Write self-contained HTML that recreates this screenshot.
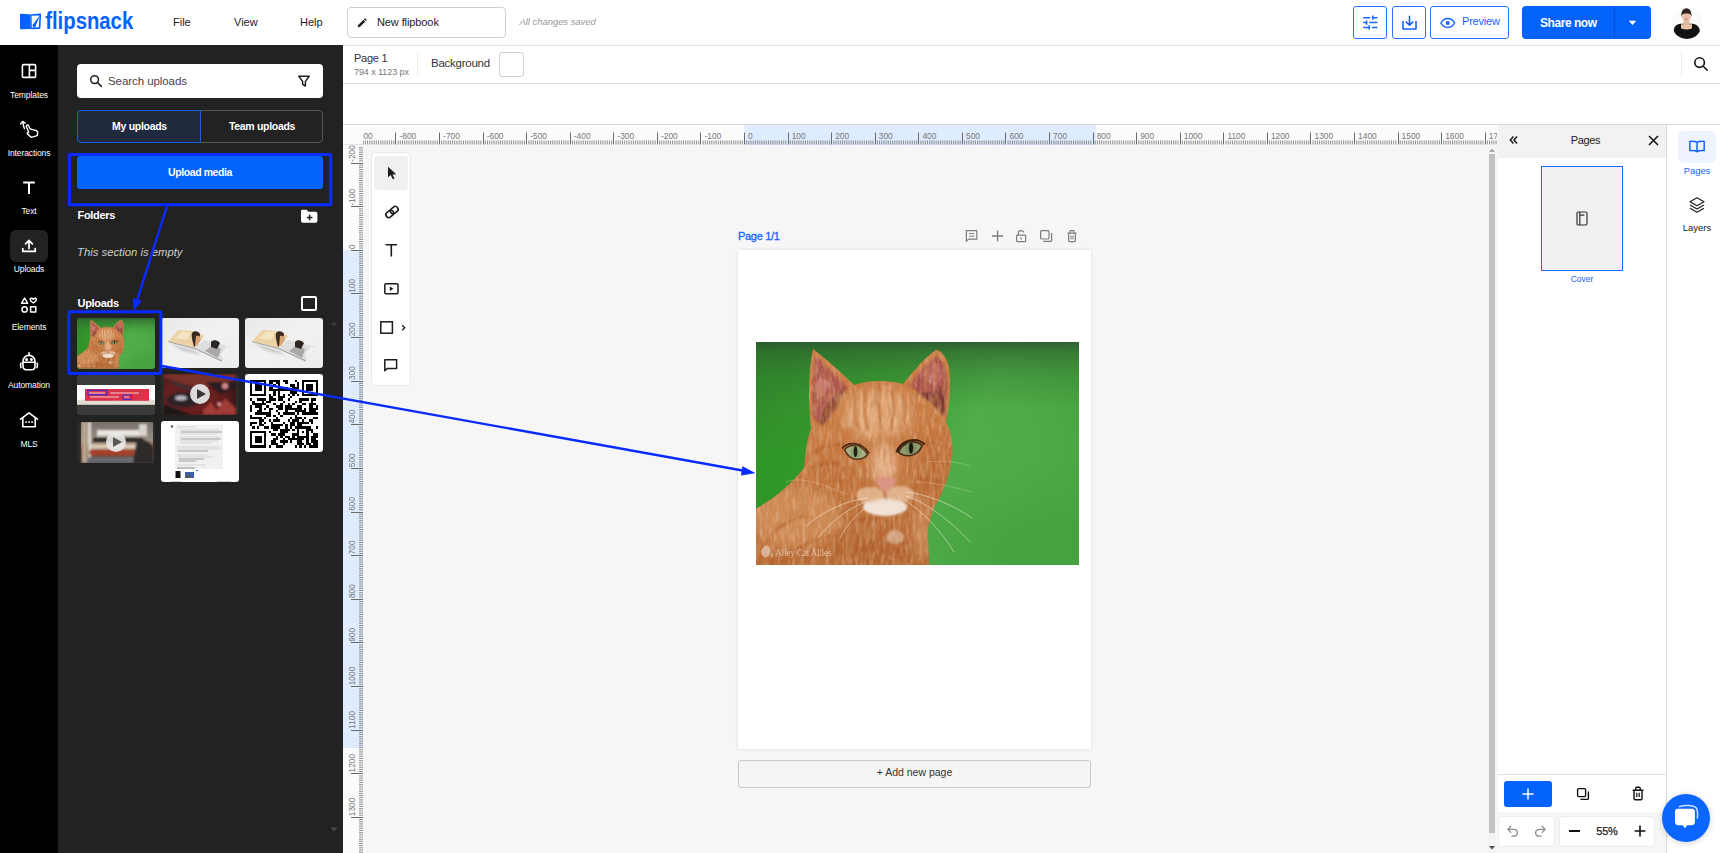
<!DOCTYPE html>
<html lang="en">
<head>
<meta charset="utf-8">
<title>Flipsnack editor</title>
<style>
*{box-sizing:border-box;margin:0;padding:0}
html,body{width:1720px;height:853px;overflow:hidden;background:#fff;font-family:"Liberation Sans",sans-serif;color:#222}
.abs{position:absolute}
#app{position:relative;width:1720px;height:853px;overflow:hidden;background:#fff}
/* top bar */
#topbar{position:absolute;left:0;top:0;width:1720px;height:46px;background:#fff;border-bottom:1px solid #e4e4e4}
.menu{position:absolute;top:15px;font-size:11px;color:#222;line-height:14px}
#title{position:absolute;left:347px;top:7px;width:159px;height:31px;border:1px solid #cfcfcf;border-radius:4px;background:#fff}
#title span{position:absolute;left:29px;top:7px;font-size:11px;line-height:14px;color:#222;letter-spacing:-0.1px}
#saved{position:absolute;left:519.500px;top:16px;letter-spacing:-0.050px;font-size:9.5px;line-height:12px;font-style:italic;color:#9a9a9a}
.tbtn{position:absolute;top:6px;height:33px;border:1px solid #2a73ff;border-radius:3px;background:#fff}
#share{position:absolute;left:1522px;top:6px;width:129px;height:33px;border-radius:4px;background:#0462fd}
#share b{position:absolute;left:18px;top:10px;font-size:12px;line-height:15px;color:#fff;letter-spacing:-0.45px}
#share i{position:absolute;left:92px;top:0;width:1px;height:33px;background:#0a4fd0}
/* left nav */
#nav{position:absolute;left:0;top:45px;width:58px;height:808px;background:#000}
.nlab{position:absolute;left:0;width:58px;text-align:center;font-size:8.5px;line-height:10px;color:#fff;letter-spacing:-0.1px}
.nico{position:absolute;left:19px;width:20px;height:20px}
/* panel */
#panel{position:absolute;left:58px;top:45px;width:285px;height:808px;background:#222}
#search{position:absolute;left:19px;top:19px;width:246px;height:34px;background:#fff;border-radius:4px}
#search span{position:absolute;left:31px;top:10px;font-size:11.5px;line-height:14px;color:#444;letter-spacing:-0.07px}
#tabs{position:absolute;left:19px;top:65px;width:246px;height:33px;border:1px solid #555;border-radius:4px}
#tab1{position:absolute;left:-1px;top:-1px;width:124px;height:33px;border:1px solid #1a5fd6;border-radius:4px 0 0 4px;background:#1f2a3e}
.tabl{position:absolute;top:9px;font-size:10.5px;line-height:13px;font-weight:bold;color:#fff;text-align:center;letter-spacing:-0.3px}
#upbtn{position:absolute;left:19px;top:111px;width:246px;height:33px;background:#0462fd;border-radius:3px;text-align:center;color:#fff;font-weight:bold;font-size:10.5px;line-height:33px;letter-spacing:-0.4px}
.h{position:absolute;left:19.500px;font-size:11px;line-height:14px;font-weight:bold;color:#fff;letter-spacing:-0.3px}
.th{position:absolute;border-radius:3px;overflow:hidden}
/* props bar */
#props{position:absolute;left:343px;top:46px;width:1377px;height:38px;background:#fff;border-bottom:1px solid #dcdcdc}
/* canvas */
#canvas{position:absolute;left:343px;top:124px;width:1377px;height:729px;background:#f6f6f6;border-top:1px solid #d9d9d9}
#page{position:absolute;left:738px;top:250px;width:353px;height:499px;background:#fff;box-shadow:0 0 3px rgba(0,0,0,.12)}
#addpage{position:absolute;left:738px;top:760px;width:353px;height:28px;border:1px solid #c9c9c9;border-radius:3px;background:#f5f5f5;text-align:center;font-size:10.5px;line-height:22px;color:#333}
/* right */
#ppanel{position:absolute;left:1498px;top:125px;width:169px;height:728px;background:#fff;border-right:1px solid #dcdcdc}
#rail{position:absolute;left:1667px;top:125px;width:53px;height:728px;background:#fff}
</style>
</head>
<body>
<div id="app">
<!--CAT-START-->
<svg width="0" height="0" style="position:absolute">
<defs>
  <linearGradient id="cg1" x1="0" y1="0" x2="1" y2="0.300">
    <stop offset="0" stop-color="#2f8a29"/><stop offset="0.400" stop-color="#3a9a32"/><stop offset="0.720" stop-color="#4daa46"/><stop offset="1" stop-color="#46a23e"/>
  </linearGradient>
  <linearGradient id="cg2" x1="0" y1="0" x2="0" y2="1">
    <stop offset="0" stop-color="#2b552d" stop-opacity="0.850"/><stop offset="0.050" stop-color="#2d602e" stop-opacity="0.600"/><stop offset="0.150" stop-color="#2e6c2d" stop-opacity="0.280"/><stop offset="0.300" stop-color="#2e6c2d" stop-opacity="0"/>
  </linearGradient>
  <radialGradient id="cg3" cx="0.820" cy="0.480" r="0.380">
    <stop offset="0" stop-color="#58b24f" stop-opacity="0.500"/><stop offset="1" stop-color="#5cb854" stop-opacity="0"/>
  </radialGradient>
  <radialGradient id="cg4" cx="0.080" cy="0.600" r="0.300">
    <stop offset="0" stop-color="#2c9a22" stop-opacity="0.700"/><stop offset="1" stop-color="#2c9a22" stop-opacity="0"/>
  </radialGradient>
  <linearGradient id="fur" x1="0" y1="0" x2="0.200" y2="1">
    <stop offset="0" stop-color="#cb7c43"/><stop offset="0.450" stop-color="#c97a41"/><stop offset="1" stop-color="#b56631"/>
  </linearGradient>
  <filter id="b1" x="-20%" y="-20%" width="140%" height="140%"><feGaussianBlur stdDeviation="1.200"/></filter>
  <filter id="b2" x="-20%" y="-20%" width="140%" height="140%"><feGaussianBlur stdDeviation="2.500"/></filter>
  <filter id="b3" x="-20%" y="-20%" width="140%" height="140%"><feGaussianBlur stdDeviation="0.600"/></filter>
  <filter id="b4" x="-30%" y="-30%" width="160%" height="160%"><feGaussianBlur stdDeviation="5"/></filter>
  <filter id="furn" x="0" y="0" width="100%" height="100%"><feTurbulence type="fractalNoise" baseFrequency="0.300 0.080" numOctaves="3" seed="4" result="n"/><feColorMatrix in="n" type="matrix" values="0 0 0 0 0.980  0 0 0 0 0.820  0 0 0 0 0.660  2.400 0 0 0 -1.000"/></filter>
  <filter id="furd" x="0" y="0" width="100%" height="100%"><feTurbulence type="fractalNoise" baseFrequency="0.220 0.060" numOctaves="3" seed="11" result="n"/><feColorMatrix in="n" type="matrix" values="0 0 0 0 0.560  0 0 0 0 0.240  0 0 0 0 0.080  0 2.600 0 0 -1.100"/></filter>
  <clipPath id="catclip">
    <path d="M0 167C10 161 20 154 28 147C36 140 42 133 48 126C49 112 51 98 55 86C52 60 52 30 57 7C70 17 86 31 98 43C112 38 132 38 147 42C157 30 168 16 180 8C186 8 192 18 193.500 28C194.500 45 194 62 190 80C197 94 198 108 195 122C192 138 186 152 179 164C175 174 172 182 172 192L173 223L0 223Z"/>
  </clipPath>
  <symbol id="cat" viewBox="0 0 323 223" preserveAspectRatio="none">
    <rect width="323" height="223" fill="url(#cg1)"/>
    <rect width="323" height="223" fill="url(#cg3)"/>
    <rect width="323" height="223" fill="url(#cg4)"/>
    <rect width="323" height="223" fill="url(#cg2)"/>
    <g filter="url(#b3)">
    <g clip-path="url(#catclip)">
      <rect width="200" height="223" fill="url(#fur)"/>
      <!-- ear inner -->
      <g filter="url(#b1)">
        <path d="M57.500 76C55 54 56 30 59.500 14C69 23 81 34 92 46C82 54 70 66 63 80Z" fill="#ad544c"/>
        <path d="M62 80C66 66 76 54 90 46C84 62 76 74 66 84Z" fill="#7a3a30" opacity="0.700"/>
        <path d="M60 40C64 34 70 36 74 44C70 52 64 56 60 58Z" fill="#d08478" opacity="0.700"/>
        <path d="M152 44C160 34 170 22 180 13C186 16 190 26 190.500 36C191.500 50 191 62 188 74C178 62 164 50 152 44Z" fill="#a64c46"/>
        <path d="M160 50C170 56 182 66 188 76C190 64 190 54 188 46C180 50 170 52 160 50Z" fill="#6a2c28" opacity="0.700"/>
        <path d="M166 30C172 24 180 20 184 22C186 30 184 40 180 46C174 42 168 36 166 30Z" fill="#cc7c70" opacity="0.600"/>
      </g>
      <!-- shading -->
      <g filter="url(#b4)">
        <ellipse cx="122" cy="72" rx="34" ry="24" fill="#e9b48a" opacity="0.800"/>
        <ellipse cx="128" cy="122" rx="13" ry="20" fill="#eab890" opacity="0.900"/>
        <ellipse cx="78" cy="130" rx="16" ry="18" fill="#c0703a" opacity="0.550"/>
        <ellipse cx="178" cy="124" rx="13" ry="26" fill="#b86832" opacity="0.650"/>
        <ellipse cx="40" cy="176" rx="44" ry="30" fill="#dc9c68" opacity="0.600"/>
        <ellipse cx="130" cy="208" rx="46" ry="16" fill="#b0602c" opacity="0.600"/>
        <ellipse cx="100" cy="186" rx="20" ry="10" fill="#b96a34" opacity="0.400"/>
        <ellipse cx="166" cy="190" rx="8" ry="30" fill="#e0a878" opacity="0.500"/>
      </g>
      <!-- stripes -->
      <g filter="url(#b1)" fill="none" stroke="#ad5a26" stroke-width="2.600" opacity="0.650" stroke-linecap="round">
        <path d="M110 48C108 60 108 74 112 88M123 44C122 58 123 72 125 86M136 48C139 60 138 74 135 88M100 56C98 66 98 76 102 86M147 54C150 64 150 76 146 86"/>
        <path d="M58 110C68 104 78 102 88 102M56 126C64 122 74 120 84 122M62 146C70 140 80 138 88 140"/>
        <path d="M192 106C184 102 174 100 166 102M193 122C185 118 177 118 169 120M186 144C180 138 172 136 164 138"/>
        <path d="M16 192C26 182 38 176 50 174M36 212C50 200 66 194 82 194M92 216C106 206 126 204 146 208M100 180C110 176 124 176 134 180"/>
      </g>
      <rect width="200" height="223" filter="url(#furn)" opacity="0.330"/>
      <rect width="200" height="223" filter="url(#furd)" opacity="0.650"/>
    </g>
    </g>
    <!-- muzzle -->
    <g filter="url(#b1)">
      <ellipse cx="129" cy="165" rx="22" ry="9" fill="#f3e8de" opacity="0.950"/>
      <ellipse cx="114" cy="153" rx="14" ry="8" fill="#e9c4a2" opacity="0.750"/>
      <ellipse cx="144" cy="152" rx="14" ry="8" fill="#e9c4a2" opacity="0.750"/>
      <ellipse cx="139" cy="195" rx="9" ry="7" fill="#f0e0d0" opacity="0.450"/>
      <path d="M119 137Q130 133 141 137Q137 147 130 150Q123 147 119 137Z" fill="#dc9484"/>
      <path d="M130 150L130 159" stroke="#b8685a" stroke-width="1.200" fill="none"/>
    </g>
    <!-- eyes -->
    <g filter="url(#b3)">
      <path d="M87.500 107.500C92 100.500 106 100 112.500 113C106 120.500 93 120.500 87.500 107.500Z" fill="#5a3418"/>
      <path d="M89.500 108C93.500 102.500 105 102.500 110.500 112.500C105.500 118.500 94.500 118.500 89.500 108Z" fill="#a4b084"/>
      <ellipse cx="100" cy="110" rx="5.500" ry="6.500" fill="#8c9c6c" opacity="0.700"/>
      <ellipse cx="99.500" cy="109.500" rx="1.900" ry="5.600" fill="#1f2416"/>
      <path d="M86 106.500C92 99.500 106 99.500 113 111.500" stroke="#4a2a14" stroke-width="1.800" fill="none"/>
      <path d="M141.500 110.500C146 98 160.500 96 167 103.500C164 114.500 149.500 118 141.500 110.500Z" fill="#4a2a14"/>
      <path d="M143.500 110C147.500 100.500 160 98.500 165 103.800C162.500 112.500 150.500 116 143.500 110Z" fill="#8f9d6e"/>
      <ellipse cx="154.500" cy="106.500" rx="5.500" ry="6.500" fill="#7c8a5c" opacity="0.700"/>
      <ellipse cx="155" cy="106" rx="2.200" ry="5.800" fill="#1a1e12"/>
      <path d="M140.500 110.500C145 97.500 161 94.500 168.500 102.500" stroke="#3e2210" stroke-width="2.200" fill="none"/>
    </g>
    <!-- whiskers -->
    <g fill="none" stroke="#f8f1e8" stroke-width="0.800" opacity="0.650" stroke-linecap="round">
      <path d="M112 156C90 158 66 170 50 184M110 160C92 166 74 180 62 196M114 163C100 172 90 184 84 196"/>
      <path d="M92 152C74 148 50 132 30 140" opacity="0.500"/>
      <path d="M150 150C170 152 196 162 216 176M150 154C170 160 196 180 214 200M148 158C166 168 186 190 198 210"/>
      <path d="M160 140C180 140 200 146 216 150M170 120C186 118 202 120 214 124" opacity="0.500"/>
    </g>
    <text x="19" y="213.500" font-family="Liberation Serif, serif" font-size="9.500" fill="#fff" fill-opacity="0.500" letter-spacing="-0.300">Alley Cat Allies</text>
    <path d="M8 205C10 202 14 204 14 209C14 214 10 218 7 214C4 211 5 207 8 205ZM15 212C17 210 18 214 16 216Z" fill="#fff" fill-opacity="0.450"/>
  </symbol>
</defs>
</svg>

<!--CAT-END-->

<!-- TOPBAR -->
<div id="topbar">
  <svg class="abs" style="left:19px;top:6px" width="120" height="32" viewBox="0 0 120 32">
    <path d="M1 8.600Q1 7.700 2 7.800L10.400 8.300Q11.200 8.400 11.200 9.200V23L2 23.300Q1 23.300 1 22.400Z" fill="#0462fd"/>
    <path d="M11.200 9.200Q11.200 8.400 12 8.300L21 7.600Q22.200 7.500 22.100 8.700L21.400 21.800Q21.300 23 20.200 23L11.200 23.300Z M20.400 9.400L19.800 21.200L12.800 21.600L12.600 9.800Z" fill="#0462fd" fill-rule="evenodd"/>
    <path d="M20.800 9.200L13.200 19.400L15.800 22.200Z" fill="#0462fd"/>
    <text transform="translate(26.200 22.900) scale(0.883 1)" font-family="Liberation Sans, sans-serif" font-weight="bold" font-size="23" fill="#0462fd">flipsnack</text>
  </svg>
  <div class="menu" style="left:173px">File</div>
  <div class="menu" style="left:234px">View</div>
  <div class="menu" style="left:300px">Help</div>
  <div id="title">
    <svg class="abs" style="left:9px;top:10px" width="10" height="10" viewBox="0 0 12 12"><path d="M1.2 8.6 L7.6 2.2 L9.8 4.4 L3.4 10.8 L1 11 Z M8.3 1.5 L9.1 0.7 Q9.6 0.3 10.1 0.7 L11.3 1.9 Q11.7 2.4 11.3 2.9 L10.5 3.7 Z" fill="#222"/></svg>
    <span>New flipbook</span>
  </div>
  <div id="saved">All changes saved</div>

  <div class="tbtn" style="left:1353px;width:34px"><svg class="abs" style="left:8px;top:8px" width="17" height="17" viewBox="0 0 17 17" fill="none" stroke="#1463ff" stroke-width="1.500"><path d="M1.200 2.700H8.200M11.400 2.700H15.400M1.200 7.600H4M7.200 7.600H15.400M1.200 12.400H6.600M9.800 12.400H15.400M10.800 0.600V4.800M4.600 5.500V9.700M7.200 10.300V14.500"/></svg></div>
  <div class="tbtn" style="left:1392px;width:34px"><svg class="abs" style="left:8px;top:8px" width="17" height="17" viewBox="0 0 17 17" fill="none" stroke="#1463ff" stroke-width="1.600" stroke-linejoin="round"><path d="M8.500 0.800V10M4.800 6.600L8.500 10.200L12.200 6.600M2 6V14H15V6"/></svg></div>
  <div class="tbtn" style="left:1430px;width:79px"><svg class="abs" style="left:9px;top:9.500px" width="15.500" height="12" viewBox="0 0 17 13" fill="none" stroke="#1463ff" stroke-width="1.600"><path d="M1 6.500C3 2.800 5.600 1.600 8.500 1.600C11.400 1.600 14 2.800 16 6.500C14 10.200 11.400 11.400 8.500 11.400C5.600 11.400 3 10.200 1 6.500Z"/><circle cx="8.500" cy="6.500" r="2.200" fill="#1463ff" stroke="none"/></svg><span class="abs" style="left:31px;top:7px;font-size:11px;line-height:14px;color:#1463ff;letter-spacing:-0.200px">Preview</span></div>
  <div id="share"><b>Share now</b><i></i><svg class="abs" style="left:106px;top:14px" width="9" height="6" viewBox="0 0 9 6"><path d="M0.800 0.800H8.200L4.500 5Z" fill="#fff"/></svg></div>
  <svg class="abs" style="left:1671px;top:7px" width="32" height="32" viewBox="0 0 32 32"><defs><clipPath id="avc"><circle cx="16" cy="16" r="16"/></clipPath></defs><circle cx="16" cy="16" r="16" fill="#fbfbfb"/><g clip-path="url(#avc)"><path d="M2.800 24C2.600 20 5.400 17 9.600 16.800L21.400 16.800C25.600 17 28.600 20 28.800 24C27 29 22 32 15.800 32C9.600 32 4.600 29 2.800 24Z" fill="#121212"/><path d="M10 17.200H21V21.600Q15.500 23.600 10 21.600Z" fill="#e9c3a8"/><path d="M12.600 12H18.400V18H12.600Z" fill="#e2b79c"/><ellipse cx="15.400" cy="9.200" rx="4.400" ry="5.600" fill="#e8bfa6"/><path d="M10.400 10.800C9.600 4.800 12 1.200 15.400 1.200C18.800 1.200 21.200 4.800 20.400 10.800C20.200 7.600 19.600 6.400 15.400 6.400C11.200 6.400 10.600 7.600 10.400 10.800Z" fill="#2e221c"/><path d="M14 12.200H16.800" stroke="#b8584e" stroke-width="0.800"/></g></svg>
</div>

<!-- LEFT NAV -->
<div id="nav">
  <!-- templates -->
  <svg class="abs" style="left:19px;top:16px" width="20" height="20" viewBox="0 0 20 20" fill="none" stroke="#fff" stroke-width="1.6"><rect x="3.4" y="3.6" width="13.2" height="12.8" rx="1.2"/><path d="M10.4 3.6V16.4M10.4 9.4H16.6"/></svg>
  <div class="nlab" style="top:45px">Templates</div>
  <!-- interactions -->
  <svg class="abs" style="left:18px;top:73px" width="24" height="22" viewBox="0 0 24 22" fill="none" stroke="#fff" stroke-width="1.400" stroke-linecap="round" stroke-linejoin="round"><path d="M6.400 10.600C5.600 8.600 5.200 6.600 4.800 4.200M2.600 6L4.800 3.400L7.200 5.200"/><path d="M10.600 14L8.400 8.800C7.800 7.200 9.800 6.400 10.600 7.800L12.200 11L17.600 12.400C19.200 12.800 19.800 13.800 19.600 15.200L19.200 17.600L13.400 19.400L9.600 16.200C8.800 15.400 9.400 14.200 10.800 14.800"/></svg>
  <div class="nlab" style="top:103px">Interactions</div>
  <!-- text -->
  <svg class="abs" style="left:19px;top:133px" width="20" height="20" viewBox="0 0 20 20" fill="none" stroke="#fff" stroke-width="2"><path d="M4.2 4.5H15.8M10 4.5V16"/></svg>
  <div class="nlab" style="top:161px">Text</div>
  <!-- uploads -->
  <div class="abs" style="left:10px;top:185px;width:38px;height:32px;border-radius:6px;background:#222"></div>
  <svg class="abs" style="left:19px;top:191px" width="20" height="20" viewBox="0 0 20 20" fill="none" stroke="#fff" stroke-width="1.7" stroke-linecap="round" stroke-linejoin="round"><path d="M10 12.6V4.6M6.6 7.8L10 4.4L13.4 7.8M3.8 12.6V15.4H16.2V12.6"/></svg>
  <div class="nlab" style="top:219px">Uploads</div>
  <!-- elements -->
  <svg class="abs" style="left:19px;top:250px" width="20" height="20" viewBox="0 0 20 20" fill="none" stroke="#fff" stroke-width="1.5" stroke-linejoin="round"><path d="M5.6 3L8.6 8.2H2.6Z"/><path d="M14.3 8C12.6 6.8 11.2 5.6 11.2 4.4C11.2 3.2 12.8 2.6 14.3 4.2C15.8 2.6 17.4 3.2 17.4 4.4C17.4 5.6 16 6.8 14.3 8Z"/><circle cx="5.6" cy="14.4" r="2.6"/><rect x="11.6" y="11.8" width="5.2" height="5.2"/></svg>
  <div class="nlab" style="top:277px">Elements</div>
  <!-- automation -->
  <svg class="abs" style="left:18px;top:306px" width="22" height="22" viewBox="0 0 22 22" fill="none" stroke="#fff" stroke-width="1.6" stroke-linecap="round" stroke-linejoin="round"><path d="M11 1.8V4.2"/><path d="M5 11.2V10.4C5 7 7.6 4.4 11 4.4C14.4 4.4 17 7 17 10.4V11.2"/><path d="M5 11.2H17V15.2C17 17.4 15.6 18.8 13.4 18.8H8.6C6.4 18.8 5 17.4 5 15.200Z"/><path d="M3 12.200C2.400 13.400 2.400 15.400 3 16.600M19 12.200C19.600 13.400 19.600 15.400 19 16.600"/><circle cx="8.600" cy="8.400" r="0.700" fill="#fff"/><circle cx="13.400" cy="8.400" r="0.700" fill="#fff"/></svg>
  <div class="nlab" style="top:335px">Automation</div>
  <!-- mls -->
  <svg class="abs" style="left:18px;top:364px" width="22" height="22" viewBox="0 0 22 22" fill="none" stroke="#fff" stroke-width="1.6" stroke-linejoin="round" stroke-linecap="round"><path d="M2.600 10.200L11 3.800L19.400 10.200"/><path d="M4.800 9V17.800H17.200V9"/><circle cx="8" cy="13" r="0.600" fill="#fff" stroke-width="0.600"/><circle cx="11" cy="13" r="0.600" fill="#fff" stroke-width="0.600"/><circle cx="14" cy="13" r="0.600" fill="#fff" stroke-width="0.600"/></svg>
  <div class="nlab" style="top:394px">MLS</div>
</div>

<!-- PANEL -->
<div id="panel">
  <div id="search"><svg class="abs" style="left:12px;top:10px" width="14" height="14" viewBox="0 0 14 14" fill="none" stroke="#222" stroke-width="1.500" stroke-linecap="round"><circle cx="5.600" cy="5.600" r="3.900"/><path d="M8.600 8.600L12.400 12.400"/></svg><span>Search uploads</span><svg class="abs" style="left:220px;top:10px" width="14" height="14" viewBox="0 0 14 14" fill="none" stroke="#222" stroke-width="1.500" stroke-linejoin="round"><path d="M1.800 2.200H12.200L8.400 7.400V12L5.600 10.400V7.400Z"/></svg></div>
  <div id="tabs"><div id="tab1"></div>
    <div class="tabl" style="left:0;width:123px">My uploads</div>
    <div class="tabl" style="left:123px;width:122px">Team uploads</div>
  </div>
  <div id="upbtn">Upload media</div>
  <div class="h" style="top:163px">Folders</div>
  <svg class="abs" style="left:242px;top:164px" width="19" height="15" viewBox="0 0 19 15"><path d="M1 2.200Q1 0.800 2.400 0.800H6.600L8.600 2.800H15.600Q17.400 2.800 17.400 4.600V12Q17.400 13.800 15.600 13.800H2.800Q1 13.800 1 12Z" fill="#fff"/><path d="M9.600 5.600V11.200M6.800 8.400H12.400" stroke="#222" stroke-width="1.500"/></svg>
  <div class="abs" style="left:19px;top:200px;font-size:11.300px;line-height:14px;font-style:italic;color:#cfcfcf">This section is empty</div>
  <div class="h" style="top:251px">Uploads</div>
  <div class="abs" style="left:243px;top:251px;width:16px;height:15px;border:2px solid #fff;border-radius:2px"></div>
  <!-- THUMBS -->
  <div class="th" style="left:19px;top:273px;width:78px;height:51px"><svg width="78" height="51"><use href="#cat" width="78" height="51"/></svg></div>
  <div class="th" style="left:103px;top:273px;width:78px;height:50px"><svg width="78" height="50" viewBox="0 0 78 50"><defs><linearGradient id="bkbg1" x1="0" y1="0" x2="1" y2="1"><stop offset="0" stop-color="#e9e9e9"/><stop offset="0.5" stop-color="#f1f1f1"/><stop offset="1" stop-color="#ececec"/></linearGradient></defs>
<rect width="78" height="50" fill="url(#bkbg1)"/>
<path d="M8 25L34 33L40 37L22 33Z" fill="#bdbdbd" filter="url(#b1)" opacity="0.8"/>
<path d="M7.200 23.200L17.400 12L31.700 13L43.300 17.800L33.700 30Z" fill="#ecd3a6"/>
<path d="M14 20L21 13.500L30 14.500L26 22Z" fill="#f4e4c4"/>
<path d="M33.700 30L43.300 21.900L69.800 28.700L61 42.600Z" fill="#dedede"/>
<path d="M44 33L52 27L60 31L57 40Z" fill="#a9a9a9"/>
<path d="M60 36L66 29L69 30L62 41Z" fill="#f2f2f2"/>
<path d="M31 15C33 12 38 13 39 16C39 20 36 22 35 27L33 29C32 24 30 19 31 15Z" fill="#3a2a20"/>
<path d="M35 18C37 17 40 19 40 22L36 28L34 28Z" fill="#d9a778"/>
<path d="M50 24C52 21 57 22 59 25L56 31L50 29Z" fill="#2e2622"/>
<path d="M7.200 23.200L33.700 30L61 42.600L60.500 43.500L33.500 31L7 24Z" fill="#9a9a9a"/>
</svg></div>
  <div class="th" style="left:187px;top:273px;width:78px;height:50px"><svg width="78" height="50" viewBox="0 0 78 50"><defs><linearGradient id="bkbg2" x1="0" y1="0" x2="1" y2="1"><stop offset="0" stop-color="#e9e9e9"/><stop offset="0.5" stop-color="#f1f1f1"/><stop offset="1" stop-color="#ececec"/></linearGradient></defs>
<rect width="78" height="50" fill="url(#bkbg2)"/>
<path d="M8 25L34 33L40 37L22 33Z" fill="#bdbdbd" filter="url(#b1)" opacity="0.8"/>
<path d="M7.200 23.200L17.400 12L31.700 13L43.300 17.800L33.700 30Z" fill="#ecd3a6"/>
<path d="M14 20L21 13.500L30 14.500L26 22Z" fill="#f4e4c4"/>
<path d="M33.700 30L43.300 21.900L69.800 28.700L61 42.600Z" fill="#dedede"/>
<path d="M44 33L52 27L60 31L57 40Z" fill="#a9a9a9"/>
<path d="M60 36L66 29L69 30L62 41Z" fill="#f2f2f2"/>
<path d="M31 15C33 12 38 13 39 16C39 20 36 22 35 27L33 29C32 24 30 19 31 15Z" fill="#3a2a20"/>
<path d="M35 18C37 17 40 19 40 22L36 28L34 28Z" fill="#d9a778"/>
<path d="M50 24C52 21 57 22 59 25L56 31L50 29Z" fill="#2e2622"/>
<path d="M7.200 23.200L33.700 30L61 42.600L60.500 43.500L33.500 31L7 24Z" fill="#9a9a9a"/>
</svg></div>
  <div class="th" style="left:19px;top:330px;width:78px;height:40px;background:#3b3b3b">
    <svg width="78" height="40" viewBox="0 0 78 40"><rect x="0" y="10" width="78" height="19.500" fill="#fff"/><path d="M0 25L20 23L40 26L60 22L78 25V29.500H0Z" fill="#e4ddd4"/><rect x="8" y="14" width="64" height="11.800" fill="#d9324a"/><path d="M12 18H28M33 18H62M13 22H42M47 22H52" stroke="#f6c9d0" stroke-width="1.200"/><rect x="11" y="15.200" width="19" height="4.600" fill="none" stroke="#0a2bff" stroke-width="0.900"/><rect x="46" y="20" width="8.500" height="4.400" fill="none" stroke="#1a2cff" stroke-width="0.800"/></svg>
  </div>
  <div class="th" style="left:103px;top:329px;width:78px;height:41px;background:#2b2b2b">
    <svg width="78" height="41" viewBox="0 0 78 41"><defs><radialGradient id="v1" cx="0.350" cy="0.550" r="0.700"><stop offset="0" stop-color="#4a2224"/><stop offset="0.500" stop-color="#6a201e"/><stop offset="1" stop-color="#3a1618"/></radialGradient></defs>
    <rect x="3" y="0" width="72" height="41" fill="url(#v1)"/>
    <g filter="url(#b1)"><ellipse cx="22" cy="26" rx="16" ry="7" fill="#2a2226"/><ellipse cx="20" cy="24" rx="6" ry="2.600" fill="#b9b4c0"/><path d="M3 4L40 14L75 6V0H3Z" fill="#7a302c"/><path d="M3 30L30 41H3Z" fill="#1e1618"/><path d="M44 8L60 20L75 14V8Z" fill="#2a1c20"/><path d="M42 36L50 28L56 36L64 24L75 34V41H42Z" fill="#a03a34"/><circle cx="64" cy="12" r="3" fill="#d98a8a"/><circle cx="58" cy="30" r="2" fill="#e8a0a0"/><path d="M10 8L34 16" stroke="#3a3038" stroke-width="3"/></g>
    <circle cx="39" cy="20" r="10" fill="#e8e8e8" fill-opacity="0.930"/><path d="M36 15L45 20L36 25Z" fill="#3a3438"/></svg>
  </div>
  <div class="th" style="left:187px;top:329px;width:78px;height:78px;background:#fff">
    <svg width="78" height="78" viewBox="0 0 78 78"><path d="M5.00 5.50h16.41v2.34h-16.41zM23.76 5.50h11.72v2.34h-11.72zM37.83 5.50h4.69v2.34h-4.69zM49.55 5.50h2.34v2.34h-2.34zM56.59 5.50h16.41v2.34h-16.41zM5.00 7.84h2.34v2.34h-2.34zM19.07 7.84h2.34v2.34h-2.34zM23.76 7.84h4.69v2.34h-4.69zM30.79 7.84h4.69v2.34h-4.69zM40.17 7.84h2.34v2.34h-2.34zM51.90 7.84h2.34v2.34h-2.34zM56.59 7.84h2.34v2.34h-2.34zM70.66 7.84h2.34v2.34h-2.34zM5.00 10.19h2.34v2.34h-2.34zM9.69 10.19h7.03v2.34h-7.03zM19.07 10.19h2.34v2.34h-2.34zM28.45 10.19h2.34v2.34h-2.34zM33.14 10.19h2.34v2.34h-2.34zM44.86 10.19h4.69v2.34h-4.69zM51.90 10.19h2.34v2.34h-2.34zM56.59 10.19h2.34v2.34h-2.34zM61.28 10.19h7.03v2.34h-7.03zM70.66 10.19h2.34v2.34h-2.34zM5.00 12.53h2.34v2.34h-2.34zM9.69 12.53h7.03v2.34h-7.03zM19.07 12.53h2.34v2.34h-2.34zM23.76 12.53h4.69v2.34h-4.69zM33.14 12.53h9.38v2.34h-9.38zM47.21 12.53h7.03v2.34h-7.03zM56.59 12.53h2.34v2.34h-2.34zM61.28 12.53h7.03v2.34h-7.03zM70.66 12.53h2.34v2.34h-2.34zM5.00 14.88h2.34v2.34h-2.34zM9.69 14.88h7.03v2.34h-7.03zM19.07 14.88h2.34v2.34h-2.34zM23.76 14.88h25.79v2.34h-25.79zM56.59 14.88h2.34v2.34h-2.34zM61.28 14.88h7.03v2.34h-7.03zM70.66 14.88h2.34v2.34h-2.34zM5.00 17.22h2.34v2.34h-2.34zM19.07 17.22h2.34v2.34h-2.34zM28.45 17.22h2.34v2.34h-2.34zM33.14 17.22h2.34v2.34h-2.34zM44.86 17.22h7.03v2.34h-7.03zM56.59 17.22h2.34v2.34h-2.34zM70.66 17.22h2.34v2.34h-2.34zM5.00 19.57h16.41v2.34h-16.41zM23.76 19.57h2.34v2.34h-2.34zM28.45 19.57h2.34v2.34h-2.34zM33.14 19.57h2.34v2.34h-2.34zM37.83 19.57h2.34v2.34h-2.34zM42.52 19.57h2.34v2.34h-2.34zM47.21 19.57h2.34v2.34h-2.34zM51.90 19.57h2.34v2.34h-2.34zM56.59 19.57h16.41v2.34h-16.41zM23.76 21.91h4.69v2.34h-4.69zM33.14 21.91h7.03v2.34h-7.03zM44.86 21.91h2.34v2.34h-2.34zM5.00 24.26h2.34v2.34h-2.34zM12.03 24.26h9.38v2.34h-9.38zM23.76 24.26h7.03v2.34h-7.03zM33.14 24.26h4.69v2.34h-4.69zM42.52 24.26h2.34v2.34h-2.34zM54.24 24.26h9.38v2.34h-9.38zM65.97 24.26h4.69v2.34h-4.69zM7.34 26.60h2.34v2.34h-2.34zM16.72 26.60h2.34v2.34h-2.34zM21.41 26.60h4.69v2.34h-4.69zM37.83 26.60h2.34v2.34h-2.34zM49.55 26.60h2.34v2.34h-2.34zM54.24 26.60h2.34v2.34h-2.34zM65.97 26.60h2.34v2.34h-2.34zM7.34 28.95h14.07v2.34h-14.07zM28.45 28.95h2.34v2.34h-2.34zM35.48 28.95h2.34v2.34h-2.34zM42.52 28.95h2.34v2.34h-2.34zM47.21 28.95h2.34v2.34h-2.34zM56.59 28.95h4.69v2.34h-4.69zM63.62 28.95h7.03v2.34h-7.03zM5.00 31.29h2.34v2.34h-2.34zM9.69 31.29h7.03v2.34h-7.03zM21.41 31.29h2.34v2.34h-2.34zM30.79 31.29h7.03v2.34h-7.03zM40.17 31.29h7.03v2.34h-7.03zM51.90 31.29h4.69v2.34h-4.69zM63.62 31.29h4.69v2.34h-4.69zM70.66 31.29h2.34v2.34h-2.34zM5.00 33.64h2.34v2.34h-2.34zM14.38 33.64h2.34v2.34h-2.34zM19.07 33.64h2.34v2.34h-2.34zM23.76 33.64h4.69v2.34h-4.69zM33.14 33.64h4.69v2.34h-4.69zM40.17 33.64h16.41v2.34h-16.41zM58.93 33.64h2.34v2.34h-2.34zM63.62 33.64h9.38v2.34h-9.38zM5.00 35.98h2.34v2.34h-2.34zM12.03 35.98h4.69v2.34h-4.69zM23.76 35.98h2.34v2.34h-2.34zM30.79 35.98h2.34v2.34h-2.34zM40.17 35.98h2.34v2.34h-2.34zM49.55 35.98h11.72v2.34h-11.72zM63.62 35.98h7.03v2.34h-7.03zM9.69 38.33h16.41v2.34h-16.41zM33.14 38.33h2.34v2.34h-2.34zM37.83 38.33h11.72v2.34h-11.72zM51.90 38.33h2.34v2.34h-2.34zM56.59 38.33h16.41v2.34h-16.41zM5.00 40.67h2.34v2.34h-2.34zM21.41 40.67h4.69v2.34h-4.69zM28.45 40.67h2.34v2.34h-2.34zM35.48 40.67h2.34v2.34h-2.34zM49.55 40.67h2.34v2.34h-2.34zM5.00 43.02h11.72v2.34h-11.72zM19.07 43.02h2.34v2.34h-2.34zM30.79 43.02h2.34v2.34h-2.34zM44.86 43.02h2.34v2.34h-2.34zM49.55 43.02h7.03v2.34h-7.03zM58.93 43.02h2.34v2.34h-2.34zM68.31 43.02h4.69v2.34h-4.69zM14.38 45.36h4.69v2.34h-4.69zM23.76 45.36h2.34v2.34h-2.34zM28.45 45.36h7.03v2.34h-7.03zM42.52 45.36h2.34v2.34h-2.34zM47.21 45.36h7.03v2.34h-7.03zM56.59 45.36h2.34v2.34h-2.34zM63.62 45.36h4.69v2.34h-4.69zM5.00 47.71h7.03v2.34h-7.03zM14.38 47.71h2.34v2.34h-2.34zM19.07 47.71h2.34v2.34h-2.34zM26.10 47.71h2.34v2.34h-2.34zM37.83 47.71h2.34v2.34h-2.34zM44.86 47.71h4.69v2.34h-4.69zM51.90 47.71h11.72v2.34h-11.72zM65.97 47.71h2.34v2.34h-2.34zM5.00 50.05h2.34v2.34h-2.34zM14.38 50.05h4.69v2.34h-4.69zM26.10 50.05h11.72v2.34h-11.72zM40.17 50.05h2.34v2.34h-2.34zM44.86 50.05h4.69v2.34h-4.69zM51.90 50.05h4.69v2.34h-4.69zM7.34 52.40h2.34v2.34h-2.34zM12.03 52.40h2.34v2.34h-2.34zM19.07 52.40h4.69v2.34h-4.69zM26.10 52.40h9.38v2.34h-9.38zM40.17 52.40h2.34v2.34h-2.34zM44.86 52.40h2.34v2.34h-2.34zM49.55 52.40h16.41v2.34h-16.41zM70.66 52.40h2.34v2.34h-2.34zM28.45 54.74h4.69v2.34h-4.69zM35.48 54.74h9.38v2.34h-9.38zM47.21 54.74h2.34v2.34h-2.34zM51.90 54.74h2.34v2.34h-2.34zM61.28 54.74h7.03v2.34h-7.03zM5.00 57.09h16.41v2.34h-16.41zM23.76 57.09h2.34v2.34h-2.34zM35.48 57.09h7.03v2.34h-7.03zM51.90 57.09h2.34v2.34h-2.34zM56.59 57.09h2.34v2.34h-2.34zM61.28 57.09h2.34v2.34h-2.34zM65.97 57.09h2.34v2.34h-2.34zM5.00 59.43h2.34v2.34h-2.34zM19.07 59.43h2.34v2.34h-2.34zM26.10 59.43h4.69v2.34h-4.69zM33.14 59.43h7.03v2.34h-7.03zM47.21 59.43h7.03v2.34h-7.03zM61.28 59.43h2.34v2.34h-2.34zM68.31 59.43h4.69v2.34h-4.69zM5.00 61.78h2.34v2.34h-2.34zM9.69 61.78h7.03v2.34h-7.03zM19.07 61.78h2.34v2.34h-2.34zM30.79 61.78h2.34v2.34h-2.34zM35.48 61.78h2.34v2.34h-2.34zM40.17 61.78h4.69v2.34h-4.69zM47.21 61.78h2.34v2.34h-2.34zM51.90 61.78h11.72v2.34h-11.72zM65.97 61.78h7.03v2.34h-7.03zM5.00 64.12h2.34v2.34h-2.34zM9.69 64.12h7.03v2.34h-7.03zM19.07 64.12h2.34v2.34h-2.34zM28.45 64.12h4.69v2.34h-4.69zM37.83 64.12h2.34v2.34h-2.34zM42.52 64.12h16.41v2.34h-16.41zM61.28 64.12h2.34v2.34h-2.34zM65.97 64.12h4.69v2.34h-4.69zM5.00 66.47h2.34v2.34h-2.34zM9.69 66.47h7.03v2.34h-7.03zM19.07 66.47h2.34v2.34h-2.34zM26.10 66.47h4.69v2.34h-4.69zM35.48 66.47h7.03v2.34h-7.03zM44.86 66.47h2.34v2.34h-2.34zM51.90 66.47h4.69v2.34h-4.69zM61.28 66.47h2.34v2.34h-2.34zM65.97 66.47h7.03v2.34h-7.03zM5.00 68.81h2.34v2.34h-2.34zM19.07 68.81h2.34v2.34h-2.34zM26.10 68.81h7.03v2.34h-7.03zM37.83 68.81h2.34v2.34h-2.34zM51.90 68.81h7.03v2.34h-7.03zM61.28 68.81h4.69v2.34h-4.69zM68.31 68.81h4.69v2.34h-4.69zM5.00 71.16h16.41v2.34h-16.41zM23.76 71.16h2.34v2.34h-2.34zM30.79 71.16h7.03v2.34h-7.03zM49.55 71.16h2.34v2.34h-2.34zM54.24 71.16h2.34v2.34h-2.34zM58.93 71.16h2.34v2.34h-2.34zM63.62 71.16h9.38v2.34h-9.38z" fill="#000" shape-rendering="crispEdges"/></svg>
  </div>
  <div class="th" style="left:19px;top:377px;width:78px;height:41px;background:#2b2b2b">
    <svg width="78" height="41" viewBox="0 0 78 41"><defs><linearGradient id="v2" x1="0" y1="0" x2="0" y2="1"><stop offset="0" stop-color="#77716a"/><stop offset="0.450" stop-color="#9a8f82"/><stop offset="0.700" stop-color="#8a4a34"/><stop offset="1" stop-color="#4a4644"/></linearGradient></defs>
    <rect x="4" y="0" width="72" height="41" fill="url(#v2)"/>
    <g filter="url(#b1)"><rect x="5" y="0" width="5" height="41" fill="#b9a48c"/><rect x="11" y="0" width="3" height="41" fill="#e0dcd6"/><path d="M20 8H62V14H20Z" fill="#e9e6e0"/><path d="M16 16H66V20H16Z" fill="#2a2624"/><path d="M14 22H60V27H14Z" fill="#d8c9b4"/><path d="M12 28H58V33H12Z" fill="#a8402c"/><path d="M10 35H56V41H10Z" fill="#6a6a70"/><path d="M60 18C66 16 72 20 76 24V41H56C58 32 58 24 60 18Z" fill="#2e2c2a"/><rect x="62" y="2" width="8" height="12" fill="#d9d4cc"/></g>
    <circle cx="39" cy="20" r="10" fill="#e8e8e8" fill-opacity="0.900"/><path d="M36 15L45 20L36 25Z" fill="#5a5650"/></svg>
  </div>
  <div class="th" style="left:103px;top:376px;width:78px;height:61px;background:#fff">
    <svg width="78" height="61" viewBox="0 0 78 61"><rect x="14" y="3.500" width="48" height="44.500" rx="2" fill="#f1f1f1"/><circle cx="11" cy="5.500" r="1.200" fill="#555"/>
    <g stroke="#c4c4c4" stroke-width="0.600"><path d="M16 6H34M19 9H58M19 11H60M19 13H56M19 16H59M19 18H61M19 20H57M19 22H50M16 26H59M16 28H60M16 30H48M17 34H46M17 36H52M17 38H44M17 40H36M16 44H45"/></g>
    <g stroke="#8a8a8a" stroke-width="0.600"><path d="M20 11H61M20 18H59M17 30H47M18 38H43M18 40H34"/></g>
    <path d="M16 47H34" stroke="#777" stroke-width="0.800"/><rect x="14.500" y="50" width="5" height="7" fill="#111"/><rect x="24" y="51" width="9" height="6" fill="#3a5fa8"/><path d="M24 57L27 53L30 57Z" fill="#555"/><rect x="35" y="49" width="2" height="1" fill="#2a6bff"/>
    <path d="M10 60.500H20M56 60.500H70" stroke="#aaa" stroke-width="0.600"/></svg>
  </div>
  <svg class="abs" style="left:272px;top:276px" width="8" height="5" viewBox="0 0 8 5"><path d="M0.500 4.500L4 0.500L7.500 4.500Z" fill="#3c3c3c"/></svg>
  <svg class="abs" style="left:272px;top:782px" width="8" height="5" viewBox="0 0 8 5"><path d="M0.500 0.500L4 4.500L7.500 0.500Z" fill="#4a4a4a"/></svg>
</div>

<!-- PROPS -->
<div id="props">
  <div class="abs" style="left:11px;top:5px;font-size:11px;line-height:14px;color:#333;letter-spacing:-0.25px">Page 1</div>
  <div class="abs" style="left:11px;top:21px;font-size:9px;line-height:10px;color:#777;letter-spacing:-0.07px">794 x 1123 px</div>
  <div class="abs" style="left:74px;top:6px;width:1px;height:24px;background:#eee"></div>
  <div class="abs" style="left:88px;top:10px;font-size:11.500px;line-height:14px;color:#333;letter-spacing:-0.250px">Background</div>
  <div class="abs" style="left:156px;top:6px;width:25px;height:25px;border:1px solid #cfcfcf;border-radius:3px"></div>
  <div class="abs" style="left:1338px;top:6px;width:1px;height:25px;background:#ececec"></div>
  <svg class="abs" style="left:1350px;top:10px" width="16" height="16" viewBox="0 0 16 16" fill="none" stroke="#111" stroke-width="1.600" stroke-linecap="round"><circle cx="6.600" cy="6.600" r="4.800"/><path d="M10.200 10.200L14.200 14.200"/></svg>
</div>

<!-- CANVAS -->
<div id="canvas"></div>
<div class="abs" style="left:343px;top:125px;width:20px;height:20px;background:#fbfbfb;border-bottom:1px solid #e2e2e2"></div>
<!--RULER-START-->
<svg class="abs" style="left:363px;top:125px" width="1134" height="20" viewBox="363 125 1134 20" font-family="Liberation Sans, sans-serif" font-size="8.4" fill="#777">
<rect x="363" y="125" width="1134" height="20" fill="#fbfbfb"/>
<rect x="744.5" y="125" width="351.5" height="20" fill="#dfecff"/>
<path d="M363.26 140.5V144.5M365.44 140.5V144.5M367.62 140.5V144.5M369.80 140.5V144.5M371.98 140.5V144.5M374.16 140.5V144.5M376.33 140.5V144.5M378.51 140.5V144.5M380.69 140.5V144.5M382.87 140.5V144.5M385.05 140.5V144.5M387.23 140.5V144.5M389.40 140.5V144.5M391.58 140.5V144.5M393.76 140.5V144.5M398.12 140.5V144.5M400.30 140.5V144.5M402.48 140.5V144.5M404.65 140.5V144.5M406.83 140.5V144.5M409.01 140.5V144.5M411.19 140.5V144.5M413.37 140.5V144.5M415.55 140.5V144.5M417.73 140.5V144.5M419.90 140.5V144.5M422.08 140.5V144.5M424.26 140.5V144.5M426.44 140.5V144.5M428.62 140.5V144.5M430.80 140.5V144.5M432.97 140.5V144.5M435.15 140.5V144.5M437.33 140.5V144.5M441.69 140.5V144.5M443.87 140.5V144.5M446.05 140.5V144.5M448.22 140.5V144.5M450.40 140.5V144.5M452.58 140.5V144.5M454.76 140.5V144.5M456.94 140.5V144.5M459.12 140.5V144.5M461.29 140.5V144.5M463.47 140.5V144.5M465.65 140.5V144.5M467.83 140.5V144.5M470.01 140.5V144.5M472.19 140.5V144.5M474.37 140.5V144.5M476.54 140.5V144.5M478.72 140.5V144.5M480.90 140.5V144.5M485.26 140.5V144.5M487.44 140.5V144.5M489.62 140.5V144.5M491.79 140.5V144.5M493.97 140.5V144.5M496.15 140.5V144.5M498.33 140.5V144.5M500.51 140.5V144.5M502.69 140.5V144.5M504.87 140.5V144.5M507.04 140.5V144.5M509.22 140.5V144.5M511.40 140.5V144.5M513.58 140.5V144.5M515.76 140.5V144.5M517.94 140.5V144.5M520.11 140.5V144.5M522.29 140.5V144.5M524.47 140.5V144.5M528.83 140.5V144.5M531.01 140.5V144.5M533.19 140.5V144.5M535.36 140.5V144.5M537.54 140.5V144.5M539.72 140.5V144.5M541.90 140.5V144.5M544.08 140.5V144.5M546.26 140.5V144.5M548.43 140.5V144.5M550.61 140.5V144.5M552.79 140.5V144.5M554.97 140.5V144.5M557.15 140.5V144.5M559.33 140.5V144.5M561.51 140.5V144.5M563.68 140.5V144.5M565.86 140.5V144.5M568.04 140.5V144.5M572.40 140.5V144.5M574.58 140.5V144.5M576.76 140.5V144.5M578.93 140.5V144.5M581.11 140.5V144.5M583.29 140.5V144.5M585.47 140.5V144.5M587.65 140.5V144.5M589.83 140.5V144.5M592.00 140.5V144.5M594.18 140.5V144.5M596.36 140.5V144.5M598.54 140.5V144.5M600.72 140.5V144.5M602.90 140.5V144.5M605.08 140.5V144.5M607.25 140.5V144.5M609.43 140.5V144.5M611.61 140.5V144.5M615.97 140.5V144.5M618.15 140.5V144.5M620.33 140.5V144.5M622.50 140.5V144.5M624.68 140.5V144.5M626.86 140.5V144.5M629.04 140.5V144.5M631.22 140.5V144.5M633.40 140.5V144.5M635.58 140.5V144.5M637.75 140.5V144.5M639.93 140.5V144.5M642.11 140.5V144.5M644.29 140.5V144.5M646.47 140.5V144.5M648.65 140.5V144.5M650.82 140.5V144.5M653.00 140.5V144.5M655.18 140.5V144.5M659.54 140.5V144.5M661.72 140.5V144.5M663.90 140.5V144.5M666.07 140.5V144.5M668.25 140.5V144.5M670.43 140.5V144.5M672.61 140.5V144.5M674.79 140.5V144.5M676.97 140.5V144.5M679.14 140.5V144.5M681.32 140.5V144.5M683.50 140.5V144.5M685.68 140.5V144.5M687.86 140.5V144.5M690.04 140.5V144.5M692.22 140.5V144.5M694.39 140.5V144.5M696.57 140.5V144.5M698.75 140.5V144.5M703.11 140.5V144.5M705.29 140.5V144.5M707.47 140.5V144.5M709.64 140.5V144.5M711.82 140.5V144.5M714.00 140.5V144.5M716.18 140.5V144.5M718.36 140.5V144.5M720.54 140.5V144.5M722.72 140.5V144.5M724.89 140.5V144.5M727.07 140.5V144.5M729.25 140.5V144.5M731.43 140.5V144.5M733.61 140.5V144.5M735.79 140.5V144.5M737.96 140.5V144.5M740.14 140.5V144.5M742.32 140.5V144.5M746.68 140.5V144.5M748.86 140.5V144.5M751.04 140.5V144.5M753.21 140.5V144.5M755.39 140.5V144.5M757.57 140.5V144.5M759.75 140.5V144.5M761.93 140.5V144.5M764.11 140.5V144.5M766.28 140.5V144.5M768.46 140.5V144.5M770.64 140.5V144.5M772.82 140.5V144.5M775.00 140.5V144.5M777.18 140.5V144.5M779.36 140.5V144.5M781.53 140.5V144.5M783.71 140.5V144.5M785.89 140.5V144.5M790.25 140.5V144.5M792.43 140.5V144.5M794.61 140.5V144.5M796.78 140.5V144.5M798.96 140.5V144.5M801.14 140.5V144.5M803.32 140.5V144.5M805.50 140.5V144.5M807.68 140.5V144.5M809.86 140.5V144.5M812.03 140.5V144.5M814.21 140.5V144.5M816.39 140.5V144.5M818.57 140.5V144.5M820.75 140.5V144.5M822.93 140.5V144.5M825.10 140.5V144.5M827.28 140.5V144.5M829.46 140.5V144.5M833.82 140.5V144.5M836.00 140.5V144.5M838.18 140.5V144.5M840.35 140.5V144.5M842.53 140.5V144.5M844.71 140.5V144.5M846.89 140.5V144.5M849.07 140.5V144.5M851.25 140.5V144.5M853.42 140.5V144.5M855.60 140.5V144.5M857.78 140.5V144.5M859.96 140.5V144.5M862.14 140.5V144.5M864.32 140.5V144.5M866.50 140.5V144.5M868.67 140.5V144.5M870.85 140.5V144.5M873.03 140.5V144.5M877.39 140.5V144.5M879.57 140.5V144.5M881.75 140.5V144.5M883.92 140.5V144.5M886.10 140.5V144.5M888.28 140.5V144.5M890.46 140.5V144.5M892.64 140.5V144.5M894.82 140.5V144.5M897.00 140.5V144.5M899.17 140.5V144.5M901.35 140.5V144.5M903.53 140.5V144.5M905.71 140.5V144.5M907.89 140.5V144.5M910.07 140.5V144.5M912.24 140.5V144.5M914.42 140.5V144.5M916.60 140.5V144.5M920.96 140.5V144.5M923.14 140.5V144.5M925.32 140.5V144.5M927.49 140.5V144.5M929.67 140.5V144.5M931.85 140.5V144.5M934.03 140.5V144.5M936.21 140.5V144.5M938.39 140.5V144.5M940.57 140.5V144.5M942.74 140.5V144.5M944.92 140.5V144.5M947.10 140.5V144.5M949.28 140.5V144.5M951.46 140.5V144.5M953.64 140.5V144.5M955.81 140.5V144.5M957.99 140.5V144.5M960.17 140.5V144.5M964.53 140.5V144.5M966.71 140.5V144.5M968.89 140.5V144.5M971.06 140.5V144.5M973.24 140.5V144.5M975.42 140.5V144.5M977.60 140.5V144.5M979.78 140.5V144.5M981.96 140.5V144.5M984.13 140.5V144.5M986.31 140.5V144.5M988.49 140.5V144.5M990.67 140.5V144.5M992.85 140.5V144.5M995.03 140.5V144.5M997.21 140.5V144.5M999.38 140.5V144.5M1001.56 140.5V144.5M1003.74 140.5V144.5M1008.10 140.5V144.5M1010.28 140.5V144.5M1012.46 140.5V144.5M1014.63 140.5V144.5M1016.81 140.5V144.5M1018.99 140.5V144.5M1021.17 140.5V144.5M1023.35 140.5V144.5M1025.53 140.5V144.5M1027.70 140.5V144.5M1029.88 140.5V144.5M1032.06 140.5V144.5M1034.24 140.5V144.5M1036.42 140.5V144.5M1038.60 140.5V144.5M1040.78 140.5V144.5M1042.95 140.5V144.5M1045.13 140.5V144.5M1047.31 140.5V144.5M1051.67 140.5V144.5M1053.85 140.5V144.5M1056.03 140.5V144.5M1058.20 140.5V144.5M1060.38 140.5V144.5M1062.56 140.5V144.5M1064.74 140.5V144.5M1066.92 140.5V144.5M1069.10 140.5V144.5M1071.28 140.5V144.5M1073.45 140.5V144.5M1075.63 140.5V144.5M1077.81 140.5V144.5M1079.99 140.5V144.5M1082.17 140.5V144.5M1084.35 140.5V144.5M1086.52 140.5V144.5M1088.70 140.5V144.5M1090.88 140.5V144.5M1095.24 140.5V144.5M1097.42 140.5V144.5M1099.60 140.5V144.5M1101.77 140.5V144.5M1103.95 140.5V144.5M1106.13 140.5V144.5M1108.31 140.5V144.5M1110.49 140.5V144.5M1112.67 140.5V144.5M1114.85 140.5V144.5M1117.02 140.5V144.5M1119.20 140.5V144.5M1121.38 140.5V144.5M1123.56 140.5V144.5M1125.74 140.5V144.5M1127.92 140.5V144.5M1130.09 140.5V144.5M1132.27 140.5V144.5M1134.45 140.5V144.5M1138.81 140.5V144.5M1140.99 140.5V144.5M1143.17 140.5V144.5M1145.34 140.5V144.5M1147.52 140.5V144.5M1149.70 140.5V144.5M1151.88 140.5V144.5M1154.06 140.5V144.5M1156.24 140.5V144.5M1158.41 140.5V144.5M1160.59 140.5V144.5M1162.77 140.5V144.5M1164.95 140.5V144.5M1167.13 140.5V144.5M1169.31 140.5V144.5M1171.49 140.5V144.5M1173.66 140.5V144.5M1175.84 140.5V144.5M1178.02 140.5V144.5M1182.38 140.5V144.5M1184.56 140.5V144.5M1186.74 140.5V144.5M1188.91 140.5V144.5M1191.09 140.5V144.5M1193.27 140.5V144.5M1195.45 140.5V144.5M1197.63 140.5V144.5M1199.81 140.5V144.5M1201.99 140.5V144.5M1204.16 140.5V144.5M1206.34 140.5V144.5M1208.52 140.5V144.5M1210.70 140.5V144.5M1212.88 140.5V144.5M1215.06 140.5V144.5M1217.23 140.5V144.5M1219.41 140.5V144.5M1221.59 140.5V144.5M1225.95 140.5V144.5M1228.13 140.5V144.5M1230.31 140.5V144.5M1232.48 140.5V144.5M1234.66 140.5V144.5M1236.84 140.5V144.5M1239.02 140.5V144.5M1241.20 140.5V144.5M1243.38 140.5V144.5M1245.56 140.5V144.5M1247.73 140.5V144.5M1249.91 140.5V144.5M1252.09 140.5V144.5M1254.27 140.5V144.5M1256.45 140.5V144.5M1258.63 140.5V144.5M1260.80 140.5V144.5M1262.98 140.5V144.5M1265.16 140.5V144.5M1269.52 140.5V144.5M1271.70 140.5V144.5M1273.88 140.5V144.5M1276.05 140.5V144.5M1278.23 140.5V144.5M1280.41 140.5V144.5M1282.59 140.5V144.5M1284.77 140.5V144.5M1286.95 140.5V144.5M1289.12 140.5V144.5M1291.30 140.5V144.5M1293.48 140.5V144.5M1295.66 140.5V144.5M1297.84 140.5V144.5M1300.02 140.5V144.5M1302.20 140.5V144.5M1304.37 140.5V144.5M1306.55 140.5V144.5M1308.73 140.5V144.5M1313.09 140.5V144.5M1315.27 140.5V144.5M1317.45 140.5V144.5M1319.62 140.5V144.5M1321.80 140.5V144.5M1323.98 140.5V144.5M1326.16 140.5V144.5M1328.34 140.5V144.5M1330.52 140.5V144.5M1332.69 140.5V144.5M1334.87 140.5V144.5M1337.05 140.5V144.5M1339.23 140.5V144.5M1341.41 140.5V144.5M1343.59 140.5V144.5M1345.77 140.5V144.5M1347.94 140.5V144.5M1350.12 140.5V144.5M1352.30 140.5V144.5M1356.66 140.5V144.5M1358.84 140.5V144.5M1361.02 140.5V144.5M1363.19 140.5V144.5M1365.37 140.5V144.5M1367.55 140.5V144.5M1369.73 140.5V144.5M1371.91 140.5V144.5M1374.09 140.5V144.5M1376.26 140.5V144.5M1378.44 140.5V144.5M1380.62 140.5V144.5M1382.80 140.5V144.5M1384.98 140.5V144.5M1387.16 140.5V144.5M1389.34 140.5V144.5M1391.51 140.5V144.5M1393.69 140.5V144.5M1395.87 140.5V144.5M1400.23 140.5V144.5M1402.41 140.5V144.5M1404.59 140.5V144.5M1406.76 140.5V144.5M1408.94 140.5V144.5M1411.12 140.5V144.5M1413.30 140.5V144.5M1415.48 140.5V144.5M1417.66 140.5V144.5M1419.84 140.5V144.5M1422.01 140.5V144.5M1424.19 140.5V144.5M1426.37 140.5V144.5M1428.55 140.5V144.5M1430.73 140.5V144.5M1432.91 140.5V144.5M1435.08 140.5V144.5M1437.26 140.5V144.5M1439.44 140.5V144.5M1443.80 140.5V144.5M1445.98 140.5V144.5M1448.16 140.5V144.5M1450.33 140.5V144.5M1452.51 140.5V144.5M1454.69 140.5V144.5M1456.87 140.5V144.5M1459.05 140.5V144.5M1461.23 140.5V144.5M1463.40 140.5V144.5M1465.58 140.5V144.5M1467.76 140.5V144.5M1469.94 140.5V144.5M1472.12 140.5V144.5M1474.30 140.5V144.5M1476.48 140.5V144.5M1478.65 140.5V144.5M1480.83 140.5V144.5M1483.01 140.5V144.5M1487.37 140.5V144.5M1489.55 140.5V144.5M1491.73 140.5V144.5M1493.90 140.5V144.5M1496.08 140.5V144.5" stroke="#808080" stroke-width="0.9" fill="none"/>
<path d="M395.5 132.5V144.5M439.5 132.5V144.5M483.5 132.5V144.5M526.5 132.5V144.5M570.5 132.5V144.5M613.5 132.5V144.5M657.5 132.5V144.5M700.5 132.5V144.5M744.5 132.5V144.5M788.5 132.5V144.5M831.5 132.5V144.5M875.5 132.5V144.5M918.5 132.5V144.5M962.5 132.5V144.5M1005.5 132.5V144.5M1049.5 132.5V144.5M1093.5 132.5V144.5M1136.5 132.5V144.5M1180.5 132.5V144.5M1223.5 132.5V144.5M1267.5 132.5V144.5M1310.5 132.5V144.5M1354.5 132.5V144.5M1398.5 132.5V144.5M1441.5 132.5V144.5M1485.5 132.5V144.5" stroke="#6a6a6a" stroke-width="1" fill="none"/>
<text x="356.0" y="138.9">-900</text>
<text x="399.5" y="138.9">-800</text>
<text x="443.1" y="138.9">-700</text>
<text x="486.7" y="138.9">-600</text>
<text x="530.2" y="138.9">-500</text>
<text x="573.8" y="138.9">-400</text>
<text x="617.4" y="138.9">-300</text>
<text x="661.0" y="138.9">-200</text>
<text x="704.5" y="138.9">-100</text>
<text x="748.1" y="138.9">0</text>
<text x="791.7" y="138.9">100</text>
<text x="835.2" y="138.9">200</text>
<text x="878.8" y="138.9">300</text>
<text x="922.4" y="138.9">400</text>
<text x="966.0" y="138.9">500</text>
<text x="1009.5" y="138.9">600</text>
<text x="1053.1" y="138.9">700</text>
<text x="1096.7" y="138.9">800</text>
<text x="1140.2" y="138.9">900</text>
<text x="1183.8" y="138.9">1000</text>
<text x="1227.4" y="138.9">1100</text>
<text x="1270.9" y="138.9">1200</text>
<text x="1314.5" y="138.9">1300</text>
<text x="1358.1" y="138.9">1400</text>
<text x="1401.6" y="138.9">1500</text>
<text x="1445.2" y="138.9">1600</text>
<text x="1488.8" y="138.9">1700</text>
</svg>
<svg class="abs" style="left:343px;top:145px" width="20" height="708" viewBox="343 145 20 708" font-family="Liberation Sans, sans-serif" font-size="8.4" fill="#777">
<rect x="343" y="145" width="20" height="708" fill="#fbfbfb"/>
<rect x="343" y="250" width="20" height="498" fill="#dfecff"/>
<path d="M359 147.79H363.5M359 149.97H363.5M359 152.16H363.5M359 154.34H363.5M359 156.52H363.5M359 158.70H363.5M359 160.88H363.5M359 165.24H363.5M359 167.42H363.5M359 169.60H363.5M359 171.78H363.5M359 173.97H363.5M359 176.15H363.5M359 178.33H363.5M359 180.51H363.5M359 182.69H363.5M359 184.87H363.5M359 187.05H363.5M359 189.23H363.5M359 191.41H363.5M359 193.59H363.5M359 195.78H363.5M359 197.96H363.5M359 200.14H363.5M359 202.32H363.5M359 204.50H363.5M359 208.86H363.5M359 211.04H363.5M359 213.22H363.5M359 215.40H363.5M359 217.59H363.5M359 219.77H363.5M359 221.95H363.5M359 224.13H363.5M359 226.31H363.5M359 228.49H363.5M359 230.67H363.5M359 232.85H363.5M359 235.03H363.5M359 237.21H363.5M359 239.40H363.5M359 241.58H363.5M359 243.76H363.5M359 245.94H363.5M359 248.12H363.5M359 252.48H363.5M359 254.66H363.5M359 256.84H363.5M359 259.02H363.5M359 261.20H363.5M359 263.39H363.5M359 265.57H363.5M359 267.75H363.5M359 269.93H363.5M359 272.11H363.5M359 274.29H363.5M359 276.47H363.5M359 278.65H363.5M359 280.83H363.5M359 283.01H363.5M359 285.20H363.5M359 287.38H363.5M359 289.56H363.5M359 291.74H363.5M359 296.10H363.5M359 298.28H363.5M359 300.46H363.5M359 302.64H363.5M359 304.82H363.5M359 307.01H363.5M359 309.19H363.5M359 311.37H363.5M359 313.55H363.5M359 315.73H363.5M359 317.91H363.5M359 320.09H363.5M359 322.27H363.5M359 324.45H363.5M359 326.63H363.5M359 328.82H363.5M359 331.00H363.5M359 333.18H363.5M359 335.36H363.5M359 339.72H363.5M359 341.90H363.5M359 344.08H363.5M359 346.26H363.5M359 348.44H363.5M359 350.63H363.5M359 352.81H363.5M359 354.99H363.5M359 357.17H363.5M359 359.35H363.5M359 361.53H363.5M359 363.71H363.5M359 365.89H363.5M359 368.07H363.5M359 370.25H363.5M359 372.44H363.5M359 374.62H363.5M359 376.80H363.5M359 378.98H363.5M359 383.34H363.5M359 385.52H363.5M359 387.70H363.5M359 389.88H363.5M359 392.06H363.5M359 394.25H363.5M359 396.43H363.5M359 398.61H363.5M359 400.79H363.5M359 402.97H363.5M359 405.15H363.5M359 407.33H363.5M359 409.51H363.5M359 411.69H363.5M359 413.88H363.5M359 416.06H363.5M359 418.24H363.5M359 420.42H363.5M359 422.60H363.5M359 426.96H363.5M359 429.14H363.5M359 431.32H363.5M359 433.50H363.5M359 435.69H363.5M359 437.87H363.5M359 440.05H363.5M359 442.23H363.5M359 444.41H363.5M359 446.59H363.5M359 448.77H363.5M359 450.95H363.5M359 453.13H363.5M359 455.31H363.5M359 457.50H363.5M359 459.68H363.5M359 461.86H363.5M359 464.04H363.5M359 466.22H363.5M359 470.58H363.5M359 472.76H363.5M359 474.94H363.5M359 477.12H363.5M359 479.30H363.5M359 481.49H363.5M359 483.67H363.5M359 485.85H363.5M359 488.03H363.5M359 490.21H363.5M359 492.39H363.5M359 494.57H363.5M359 496.75H363.5M359 498.93H363.5M359 501.12H363.5M359 503.30H363.5M359 505.48H363.5M359 507.66H363.5M359 509.84H363.5M359 514.20H363.5M359 516.38H363.5M359 518.56H363.5M359 520.74H363.5M359 522.92H363.5M359 525.11H363.5M359 527.29H363.5M359 529.47H363.5M359 531.65H363.5M359 533.83H363.5M359 536.01H363.5M359 538.19H363.5M359 540.37H363.5M359 542.55H363.5M359 544.74H363.5M359 546.92H363.5M359 549.10H363.5M359 551.28H363.5M359 553.46H363.5M359 557.82H363.5M359 560.00H363.5M359 562.18H363.5M359 564.36H363.5M359 566.55H363.5M359 568.73H363.5M359 570.91H363.5M359 573.09H363.5M359 575.27H363.5M359 577.45H363.5M359 579.63H363.5M359 581.81H363.5M359 583.99H363.5M359 586.17H363.5M359 588.36H363.5M359 590.54H363.5M359 592.72H363.5M359 594.90H363.5M359 597.08H363.5M359 601.44H363.5M359 603.62H363.5M359 605.80H363.5M359 607.98H363.5M359 610.16H363.5M359 612.35H363.5M359 614.53H363.5M359 616.71H363.5M359 618.89H363.5M359 621.07H363.5M359 623.25H363.5M359 625.43H363.5M359 627.61H363.5M359 629.79H363.5M359 631.98H363.5M359 634.16H363.5M359 636.34H363.5M359 638.52H363.5M359 640.70H363.5M359 645.06H363.5M359 647.24H363.5M359 649.42H363.5M359 651.60H363.5M359 653.79H363.5M359 655.97H363.5M359 658.15H363.5M359 660.33H363.5M359 662.51H363.5M359 664.69H363.5M359 666.87H363.5M359 669.05H363.5M359 671.23H363.5M359 673.41H363.5M359 675.60H363.5M359 677.78H363.5M359 679.96H363.5M359 682.14H363.5M359 684.32H363.5M359 688.68H363.5M359 690.86H363.5M359 693.04H363.5M359 695.22H363.5M359 697.40H363.5M359 699.59H363.5M359 701.77H363.5M359 703.95H363.5M359 706.13H363.5M359 708.31H363.5M359 710.49H363.5M359 712.67H363.5M359 714.85H363.5M359 717.03H363.5M359 719.21H363.5M359 721.40H363.5M359 723.58H363.5M359 725.76H363.5M359 727.94H363.5M359 732.30H363.5M359 734.48H363.5M359 736.66H363.5M359 738.84H363.5M359 741.03H363.5M359 743.21H363.5M359 745.39H363.5M359 747.57H363.5M359 749.75H363.5M359 751.93H363.5M359 754.11H363.5M359 756.29H363.5M359 758.47H363.5M359 760.65H363.5M359 762.84H363.5M359 765.02H363.5M359 767.20H363.5M359 769.38H363.5M359 771.56H363.5M359 775.92H363.5M359 778.10H363.5M359 780.28H363.5M359 782.46H363.5M359 784.64H363.5M359 786.83H363.5M359 789.01H363.5M359 791.19H363.5M359 793.37H363.5M359 795.55H363.5M359 797.73H363.5M359 799.91H363.5M359 802.09H363.5M359 804.27H363.5M359 806.45H363.5M359 808.64H363.5M359 810.82H363.5M359 813.00H363.5M359 815.18H363.5M359 819.54H363.5M359 821.72H363.5M359 823.90H363.5M359 826.08H363.5M359 828.26H363.5M359 830.45H363.5M359 832.63H363.5M359 834.81H363.5M359 836.99H363.5M359 839.17H363.5M359 841.35H363.5M359 843.53H363.5M359 845.71H363.5M359 847.89H363.5M359 850.08H363.5M359 852.26H363.5" stroke="#808080" stroke-width="0.9" fill="none"/>
<path d="M351 163.5H363.5M351 206.5H363.5M351 250.5H363.5M351 293.5H363.5M351 337.5H363.5M351 381.5H363.5M351 424.5H363.5M351 468.5H363.5M351 512.5H363.5M351 555.5H363.5M351 599.5H363.5M351 642.5H363.5M351 686.5H363.5M351 730.5H363.5M351 773.5H363.5M351 817.5H363.5" stroke="#6a6a6a" stroke-width="1" fill="none"/>
<text transform="translate(355.3 161.9) rotate(-90)">-200</text>
<text transform="translate(355.3 205.5) rotate(-90)">-100</text>
<text transform="translate(355.3 249.1) rotate(-90)">0</text>
<text transform="translate(355.3 292.7) rotate(-90)">100</text>
<text transform="translate(355.3 336.3) rotate(-90)">200</text>
<text transform="translate(355.3 380.0) rotate(-90)">300</text>
<text transform="translate(355.3 423.6) rotate(-90)">400</text>
<text transform="translate(355.3 467.2) rotate(-90)">500</text>
<text transform="translate(355.3 510.8) rotate(-90)">600</text>
<text transform="translate(355.3 554.4) rotate(-90)">700</text>
<text transform="translate(355.3 598.1) rotate(-90)">800</text>
<text transform="translate(355.3 641.7) rotate(-90)">900</text>
<text transform="translate(355.3 685.3) rotate(-90)">1000</text>
<text transform="translate(355.3 728.9) rotate(-90)">1100</text>
<text transform="translate(355.3 772.5) rotate(-90)">1200</text>
<text transform="translate(355.3 816.2) rotate(-90)">1300</text>
</svg>
<!--RULER-END-->
<!-- TOOLBAR -->
<div class="abs" style="left:371px;top:152px;width:40px;height:234px;background:#fff;border:1px solid #e9e9e9;border-radius:4px"></div>
<div class="abs" style="left:374px;top:156px;width:34px;height:34px;background:#f0f0f0;border-radius:4px"></div>
<svg class="abs" style="left:381px;top:162px" width="22" height="22" viewBox="0 0 22 22"><path d="M7 4.800L7 15.600L9.700 13.100L11.700 17.300L13.500 16.500L11.500 12.400L15.200 12.200Z" fill="#1c1c1c"/></svg>
<svg class="abs" style="left:381px;top:201px" width="22" height="22" viewBox="0 0 22 22" fill="none" stroke="#1c1c1c" stroke-width="1.600" stroke-linecap="round"><g transform="rotate(-40 11 11)"><rect x="3.900" y="8.200" width="8.400" height="5.600" rx="2.800"/><rect x="9.700" y="8.200" width="8.400" height="5.600" rx="2.800"/></g></svg>
<svg class="abs" style="left:381px;top:239px" width="22" height="22" viewBox="0 0 22 22" fill="none" stroke="#1c1c1c" stroke-width="1.600"><path d="M4.600 5.800H16M10.300 5.800V17.600"/></svg>
<svg class="abs" style="left:381px;top:278px" width="22" height="22" viewBox="0 0 22 22" fill="none" stroke="#1c1c1c" stroke-width="1.500"><rect x="3.800" y="5.800" width="13.200" height="10" rx="1.200"/><path d="M8.800 8.600L12.400 10.800L8.800 13Z" fill="#1c1c1c" stroke="none"/></svg>
<svg class="abs" style="left:376px;top:316px" width="32" height="22" viewBox="0 0 32 22" fill="none" stroke="#1c1c1c" stroke-width="1.500"><rect x="4.800" y="5.800" width="11.600" height="11.400"/><path d="M26.200 9.200L28.800 11.700L26.200 14.200" stroke-width="1.300"/></svg>
<svg class="abs" style="left:381px;top:354px" width="22" height="22" viewBox="0 0 22 22" fill="none" stroke="#1c1c1c" stroke-width="1.500" stroke-linejoin="round"><path d="M3.800 5.800H15.600V14.400H6.400L3.800 16.800Z"/></svg>

<!-- PAGE HEADER -->
<div class="abs" style="left:738px;top:229px;font-size:11px;line-height:14px;color:#1463ff;letter-spacing:-0.300px;-webkit-text-stroke:0.300px #1463ff">Page 1/1</div>
<svg class="abs" style="left:964px;top:228px" width="116" height="16" viewBox="0 0 116 16" fill="none" stroke="#7d7d7d" stroke-width="1.200" stroke-linejoin="round">
  <path d="M2.400 2.600H12.800V11.200H4.600L2.400 13.400Z"/><path d="M5 5.600H10.400M5 8.200H10.400" stroke-width="1"/>
  <path d="M33.600 2.400V13.600M28 8H39.200" stroke-width="1.400"/>
  <rect x="52.600" y="7.200" width="9" height="6.400" rx="0.800"/><path d="M54.400 7V4.800C54.400 2 59.800 2 59.800 4.600"/><path d="M57.100 9.400V11.400" stroke-width="1.400"/>
  <rect x="76.600" y="2.600" width="8.400" height="8.400" rx="1"/><path d="M79.200 13.400H86.600Q87.600 13.400 87.600 12.400V5" />
  <path d="M103.400 5.200H112.600M104.600 5.200V12.600Q104.600 13.600 105.600 13.600H110.400Q111.400 13.600 111.400 12.600V5.200M106 5V3.400Q106 2.600 106.800 2.600H109.200Q110 2.600 110 3.400V5"/><path d="M107 7.400V11.400M109 7.400V11.400" stroke-width="1"/>
</svg>
<div id="page"></div>
<svg class="abs" style="left:756px;top:342px" width="323" height="223"><use href="#cat" width="323" height="223"/></svg>
<div id="addpage">+ Add new page</div>

<!-- RIGHT -->
<!-- scrollbar -->
<div class="abs" style="left:1488px;top:146px;width:8px;height:707px;background:#f4f4f4"></div>
<div class="abs" style="left:1489px;top:154px;width:6px;height:679px;background:#c1c1c1"></div>
<svg class="abs" style="left:1488px;top:147px" width="8" height="6" viewBox="0 0 8 6"><path d="M1 5L4 1.500L7 5Z" fill="#a6a6a6"/></svg>
<svg class="abs" style="left:1488px;top:845px" width="8" height="6" viewBox="0 0 8 6"><path d="M1 1L4 4.500L7 1Z" fill="#505050"/></svg>
<div id="ppanel">
  <div class="abs" style="left:0;top:0;width:168px;height:33px;background:#f2f2f2"></div>
  <svg class="abs" style="left:10.500px;top:10px" width="10" height="10" viewBox="0 0 10 10" fill="none" stroke="#222" stroke-width="1.600"><path d="M4.400 1.400L1.400 5L4.400 8.600M8 1.400L5 5L8 8.600"/></svg>
  <div class="abs" style="left:0;top:8px;width:175px;text-align:center;font-size:11px;line-height:14px;color:#222;letter-spacing:-0.350px">Pages</div>
  <svg class="abs" style="left:150px;top:10px" width="11" height="11" viewBox="0 0 11 11" stroke="#111" stroke-width="1.500" fill="none"><path d="M1 1L10 10M10 1L1 10"/></svg>
  <div class="abs" style="left:43px;top:41px;width:82px;height:105px;border:1px solid #1a6bff;background:#f1f1f1"></div>
  <svg class="abs" style="left:78px;top:86px" width="12" height="15" viewBox="0 0 12 15" fill="none" stroke="#333" stroke-width="1.200"><rect x="1" y="1" width="10" height="13" rx="1.200"/><path d="M3.800 1V14M3.800 4.200H8.400"/></svg>
  <div class="abs" style="left:43px;top:149px;width:82px;text-align:center;font-size:8.500px;line-height:10px;color:#1463ff">Cover</div>
  <div class="abs" style="left:0;top:649px;width:168px;height:1px;background:#dedede"></div>
  <div class="abs" style="left:6px;top:656px;width:48px;height:26px;border-radius:3px;background:#0462fd"></div>
  <svg class="abs" style="left:24px;top:663px" width="12" height="12" viewBox="0 0 12 12" stroke="#fff" stroke-width="1.500" fill="none"><path d="M6 0.500V11.500M0.500 6H11.500"/></svg>
  <svg class="abs" style="left:78px;top:662px" width="14" height="14" viewBox="0 0 14 14" fill="none" stroke="#111" stroke-width="1.400" stroke-linejoin="round"><rect x="1.600" y="1.600" width="8" height="8" rx="1"/><path d="M4.400 12.400H11.400Q12.400 12.400 12.400 11.400V4.400"/></svg>
  <svg class="abs" style="left:133px;top:661px" width="14" height="15" viewBox="0 0 14 15" fill="none" stroke="#111" stroke-width="1.400" stroke-linejoin="round"><path d="M1.600 4.200H12.400M3 4.200V12.600Q3 13.800 4.200 13.800H9.800Q11 13.800 11 12.600V4.200M4.800 4V2.200Q4.800 1.200 5.800 1.200H8.200Q9.200 1.200 9.200 2.200V4"/><path d="M5.800 6.800V11M8.200 6.800V11" stroke-width="1.200"/></svg>
  <div class="abs" style="left:0;top:687px;width:168px;height:41px;background:#f6f6f6"></div>
  <div class="abs" style="left:0px;top:691px;width:57px;height:31px;border:1px solid #ececec;border-radius:4px;background:#fff"></div>
  <svg class="abs" style="left:8px;top:699px" width="14" height="14" viewBox="0 0 14 14" fill="none" stroke="#8c8c8c" stroke-width="1.300" stroke-linecap="round" stroke-linejoin="round"><path d="M2 5.400H7.600C10.400 5.400 11.400 7.400 11.400 8.800C11.400 10.600 10 12.200 7.800 12.200H6M4.800 2.200L1.800 5.400L4.800 8.400"/></svg>
  <svg class="abs" style="left:35px;top:699px" width="14" height="14" viewBox="0 0 14 14" fill="none" stroke="#8c8c8c" stroke-width="1.300" stroke-linecap="round" stroke-linejoin="round"><path d="M12 5.400H6.400C3.600 5.400 2.600 7.400 2.600 8.800C2.600 10.600 4 12.200 6.200 12.200H8M9.200 2.200L12.200 5.400L9.200 8.400"/></svg>
  <div class="abs" style="left:61px;top:691px;width:96px;height:31px;border:1px solid #ececec;border-radius:4px;background:#fff"></div>
  <div class="abs" style="left:71px;top:705px;width:11px;height:2px;background:#111"></div>
  <div class="abs" style="left:89px;top:699px;width:40px;text-align:center;font-size:11px;line-height:14px;color:#222;letter-spacing:-0.200px;-webkit-text-stroke:0.250px #222">55%</div>
  <svg class="abs" style="left:136px;top:700px" width="12" height="12" viewBox="0 0 12 12" stroke="#111" stroke-width="1.600" fill="none"><path d="M6 0.600V11.400M0.600 6H11.400"/></svg>
</div>
<div id="rail">
  <div class="abs" style="left:11px;top:6px;width:38px;height:32px;border-radius:6px;background:#eef3ff"></div>
  <svg class="abs" style="left:21px;top:14px" width="18" height="16" viewBox="0 0 18 16" fill="none" stroke="#1463ff" stroke-width="1.500" stroke-linejoin="round"><path d="M9 3.400C7.600 2.400 5 2.200 1.800 2.400V11.600C5 11.400 7.600 11.600 9 12.800C10.400 11.600 13 11.400 16.200 11.600V2.400C13 2.200 10.400 2.400 9 3.400ZM9 3.400V12.800"/></svg>
  <div class="abs" style="left:0;top:39.500px;width:60px;text-align:center;font-size:9.500px;line-height:12px;color:#1463ff;letter-spacing:-0.100px">Pages</div>
  <svg class="abs" style="left:21px;top:71px" width="18" height="18" viewBox="0 0 18 18" fill="none" stroke="#222" stroke-width="1.300" stroke-linejoin="round"><path d="M9 1.800L16 5.800L9 9.800L2 5.800Z"/><path d="M2 9L9 13L16 9M2 12.200L9 16.200L16 12.200"/></svg>
  <div class="abs" style="left:0;top:96.500px;width:60px;text-align:center;font-size:9.500px;line-height:12px;color:#222">Layers</div>
</div>
<!-- chat -->
<div class="abs" style="left:1662px;top:794px;width:48px;height:48px;border-radius:24px;background:#0b66ff;box-shadow:0 1px 6px rgba(0,0,0,.18)"></div>
<svg class="abs" style="left:1670.500px;top:803px" width="31" height="31" viewBox="0 0 28 28"><path d="M7.200 3.400C12 1.600 20 1.800 22.600 4.200C24.200 6 24.200 10 23.800 14" fill="none" stroke="#cfe0ff" stroke-width="1.400"/><path d="M6 5.200Q3.600 5.400 3.600 8V17Q3.600 19.800 6 20H10.600L12.600 22.800L14.600 20H19Q21.600 19.800 21.600 17V8Q21.600 5.400 19 5.200Z" fill="#fff"/></svg>


<!-- ANNOTATIONS -->
<svg class="abs" style="left:0;top:0;pointer-events:none" width="1720" height="853" viewBox="0 0 1720 853" fill="none" stroke="#0a2bff" stroke-width="3">
  <rect x="69.400" y="154.400" width="261.400" height="50.400" rx="1"/>
  <rect x="68.800" y="311.700" width="92.100" height="61.800" rx="1"/>
  <path d="M167 206L137.300 299.800" stroke-width="2.400"/>
  <path d="M134.100 310.400L133 298.600L141.200 301.300Z" fill="#0a2bff" stroke-width="0.600"/>
  <path d="M162 366L742.500 470.500" stroke-width="2.400"/>
  <path d="M754.700 473L741.300 475.200L742.600 466.600Z" fill="#0a2bff" stroke-width="0.600"/>
</svg>
</div>
</body>
</html>
